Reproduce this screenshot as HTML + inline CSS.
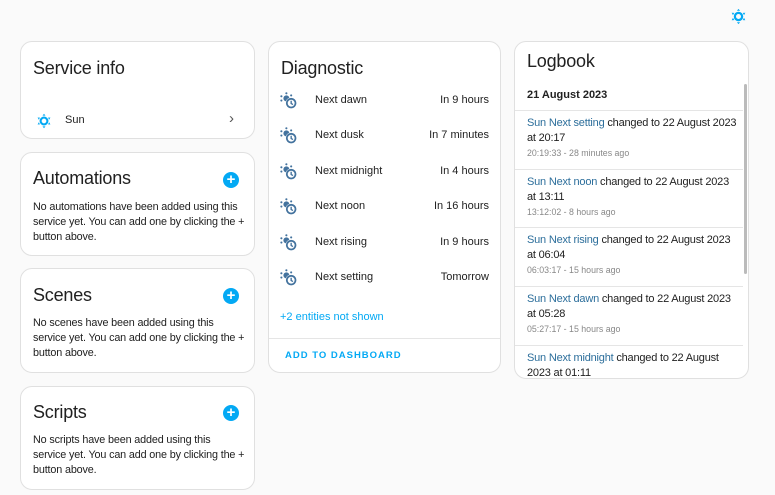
<!DOCTYPE html><html><head><style>
*{box-sizing:border-box;margin:0;padding:0}
body{width:775px;height:495px;background:#fafafa;font-family:"Liberation Sans",sans-serif;color:#212121;position:relative;overflow:hidden}
.card{position:absolute;background:#fff;border:1px solid #e0e0e0;border-radius:12px;overflow:hidden}
.t{position:absolute;left:12px;font-size:18px;color:#212121;letter-spacing:-0.2px}
.p{position:absolute;left:12px;font-size:10.8px;line-height:15px;white-space:nowrap;letter-spacing:-0.15px}
.plus{position:absolute;right:15px;width:16px;height:16px;border-radius:50%;background:#03a9f4;color:#fff;font-size:15px;line-height:16px;text-align:center;font-weight:bold}
.row{position:absolute;left:0;right:0;height:20px;font-size:11px}
.row .n{position:absolute;left:46px;top:3px}
.row .v{position:absolute;right:11px;top:3px}
.row svg{position:absolute;left:11px;top:1px}
.lb{position:absolute;left:12px;font-size:11px;line-height:15px;white-space:nowrap;letter-spacing:-0.2px}
.lb a{color:#2c6e9b;text-decoration:none}
.lb .s{font-size:8.8px;color:#888;line-height:14px;letter-spacing:0}
.sep{position:absolute;left:0;right:5px;height:1px;background:#e5e5e5}
</style></head><body>
<svg width="0" height="0" style="position:absolute"><defs>
<g id="sun"><circle cx="8" cy="8" r="3.4" fill="none" stroke="#03a9f4" stroke-width="2.1"/><g fill="#03a9f4"><path d="M8 0.8l1.5 1.8h-3z"/><path d="M8 15.2l1.5-1.8h-3z"/><path d="M1.6 4.5l2.4.1-1.2 2.2z"/><path d="M14.4 4.5l-2.4.1 1.2 2.2z"/><path d="M1.6 11.5l2.4-.1-1.2-2.2z"/><path d="M14.4 11.5l-2.4-.1 1.2-2.2z"/></g></g>
<g id="dia"><circle cx="6" cy="6" r="2.8" fill="#44739e"/><g fill="#44739e"><circle cx="6" cy="1.2" r="1"/><circle cx="1.3" cy="4" r="1"/><circle cx="1.3" cy="8" r="1"/><circle cx="10.5" cy="3.2" r="1"/></g><circle cx="10.5" cy="10.5" r="5.3" fill="#fff"/><circle cx="10.5" cy="10.5" r="4.1" fill="none" stroke="#44739e" stroke-width="1.7"/><path d="M10.5 8.2v2.6l1.7 1" stroke="#44739e" stroke-width="1.3" fill="none"/></g>
</defs></svg>
<svg style="position:absolute;left:730px;top:8px" width="17" height="17" viewBox="0 0 16 16"><use href="#sun"/></svg>

<div class="card" style="left:20px;top:41px;width:235px;height:98px">
<div class="t" style="top:16px">Service info</div>
<svg style="position:absolute;left:15px;top:71px" width="16" height="16" viewBox="0 0 16 16"><use href="#sun"/></svg>
<div style="position:absolute;left:44px;top:72px;font-size:11px">Sun</div>
<div style="position:absolute;right:20px;top:68px;font-size:15px;color:#555">›</div>
</div>
<div class="card" style="left:20px;top:152px;width:235px;height:104px">
<div class="t" style="top:15px">Automations</div><div class="plus" style="top:19px">+</div>
<div class="p" style="top:47px">No automations have been added using this<br>service yet. You can add one by clicking the +<br>button above.</div></div>
<div class="card" style="left:20px;top:268px;width:235px;height:105px">
<div class="t" style="top:16px">Scenes</div><div class="plus" style="top:19px">+</div>
<div class="p" style="top:47px">No scenes have been added using this<br>service yet. You can add one by clicking the +<br>button above.</div></div>
<div class="card" style="left:20px;top:386px;width:235px;height:104px">
<div class="t" style="top:15px">Scripts</div><div class="plus" style="top:18px">+</div>
<div class="p" style="top:46px">No scripts have been added using this<br>service yet. You can add one by clicking the +<br>button above.</div></div>

<div class="card" style="left:268px;top:41px;width:233px;height:332px">
<div class="t" style="top:16px">Diagnostic</div>
<div class="row" style="top:49px"><svg width="17" height="17" viewBox="0 0 16 16"><use href="#dia"/></svg><span class="n">Next dawn</span><span class="v">In 9 hours</span></div>
<div class="row" style="top:84px"><svg width="17" height="17" viewBox="0 0 16 16"><use href="#dia"/></svg><span class="n">Next dusk</span><span class="v">In 7 minutes</span></div>
<div class="row" style="top:120px"><svg width="17" height="17" viewBox="0 0 16 16"><use href="#dia"/></svg><span class="n">Next midnight</span><span class="v">In 4 hours</span></div>
<div class="row" style="top:155px"><svg width="17" height="17" viewBox="0 0 16 16"><use href="#dia"/></svg><span class="n">Next noon</span><span class="v">In 16 hours</span></div>
<div class="row" style="top:191px"><svg width="17" height="17" viewBox="0 0 16 16"><use href="#dia"/></svg><span class="n">Next rising</span><span class="v">In 9 hours</span></div>
<div class="row" style="top:226px"><svg width="17" height="17" viewBox="0 0 16 16"><use href="#dia"/></svg><span class="n">Next setting</span><span class="v">Tomorrow</span></div>
<div style="position:absolute;left:11px;top:269px;font-size:11px;color:#03a9f4">+2 entities not shown</div>
<div style="position:absolute;left:0;right:0;top:296px;height:1px;background:#e5e5e5"></div>
<div style="position:absolute;left:16px;top:308px;font-size:9.5px;color:#03a9f4;font-weight:bold;letter-spacing:1px">ADD TO DASHBOARD</div>
</div>

<div class="card" style="left:514px;top:41px;width:235px;height:338px">
<div class="t" style="top:9px">Logbook</div>
<div style="position:absolute;left:12px;top:47px;font-size:11px;font-weight:bold">21 August 2023</div>
<div style="position:absolute;right:1px;top:42px;width:3px;height:190px;background:#bbb;border-radius:2px"></div>
<div class="sep" style="top:68px"></div>
<div class="lb" style="top:74px"><a>Sun Next setting</a> changed to 22 August 2023<br>at 20:17<div class="s">20:19:33 - 28 minutes ago</div></div>
<div class="sep" style="top:127px"></div>
<div class="lb" style="top:133px"><a>Sun Next noon</a> changed to 22 August 2023<br>at 13:11<div class="s">13:12:02 - 8 hours ago</div></div>
<div class="sep" style="top:185px"></div>
<div class="lb" style="top:191px"><a>Sun Next rising</a> changed to 22 August 2023<br>at 06:04<div class="s">06:03:17 - 15 hours ago</div></div>
<div class="sep" style="top:244px"></div>
<div class="lb" style="top:250px"><a>Sun Next dawn</a> changed to 22 August 2023<br>at 05:28<div class="s">05:27:17 - 15 hours ago</div></div>
<div class="sep" style="top:303px"></div>
<div class="lb" style="top:309px"><a>Sun Next midnight</a> changed to 22 August<br>2023 at 01:11</div>
</div>
</body></html>
